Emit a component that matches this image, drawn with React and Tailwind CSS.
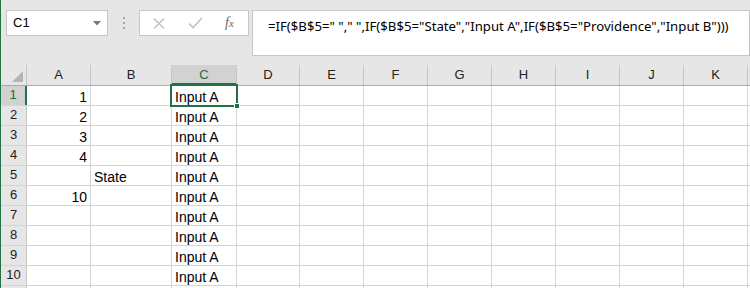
const columns = [
  { key: 'A', w: 'w-[64px]' },
  { key: 'B', w: 'w-[81px]' },
  { key: 'C', w: 'w-[65px]' },
  { key: 'D', w: 'w-[63px]' },
  { key: 'E', w: 'w-[64px]' },
  { key: 'F', w: 'w-[64px]' },
  { key: 'G', w: 'w-[64px]' },
  { key: 'H', w: 'w-[64px]' },
  { key: 'I', w: 'w-[64px]' },
  { key: 'J', w: 'w-[64px]' },
  { key: 'K', w: 'w-[64px]' },
  { key: 'L', w: 'w-[64px]', hidden: true },
];

const data = {
  1: { A: 1, C: 'Input A' },
  2: { A: 2, C: 'Input A' },
  3: { A: 3, C: 'Input A' },
  4: { A: 4, C: 'Input A' },
  5: { B: 'State', C: 'Input A' },
  6: { A: 10, C: 'Input A' },
  7: { C: 'Input A' },
  8: { C: 'Input A' },
  9: { C: 'Input A' },
  10: { C: 'Input A' },
};

const formula = '=IF($B$5=" "," ",IF($B$5="State","Input A",IF($B$5="Providence","Input B")))';

const Toolbar = () => (
  <div className="h-[65px] bg-[#e6e6e6] flex items-start pt-[10px] pl-[5px]">
    <div className="w-[102px] h-[26px] bg-white border border-[#c6c6c6] flex items-center pl-[6px] pr-[6px] justify-between">
      <span className="text-[13px] text-black">C1</span>
      <svg width="8" height="5" viewBox="0 0 8 5"><path d="M0 0h8L4 4.5z" fill="#777" /></svg>
    </div>
    <div className="w-[31px] h-[26px] flex flex-col items-center justify-center gap-[3px]">
      <span className="w-[2px] h-[2px] bg-[#a6a6a6]" />
      <span className="w-[2px] h-[2px] bg-[#a6a6a6]" />
      <span className="w-[2px] h-[2px] bg-[#a6a6a6]" />
    </div>
    <div className="w-[110px] h-[26px] bg-white border border-[#c6c6c6] flex items-center">
      <svg className="ml-[13px]" width="12" height="11" viewBox="0 0 12 11">
        <path d="M1 0.5L11 10.5M11 0.5L1 10.5" stroke="#c0c0c0" strokeWidth="1.4" />
      </svg>
      <svg className="ml-[23px]" width="15" height="12" viewBox="0 0 15 12">
        <path d="M1 6.5L5 10.5L14 1" stroke="#c0c0c0" strokeWidth="1.6" fill="none" />
      </svg>
      <span className="ml-[22px] text-[14px] italic text-[#666] font-['Liberation_Serif',serif] leading-none">
        f<span className="text-[11px]">x</span>
      </span>
    </div>
    <div className="ml-[3px] w-[498px] h-[46px] bg-white border border-[#c6c6c6] pl-[15px] pt-[3px]">
      <span className="text-[13.2px] text-black whitespace-nowrap font-['Noto_Sans',sans-serif]">{formula}</span>
    </div>
  </div>
);

const HeaderRow = () => (
  <div className="flex h-[21px] bg-[#e6e6e6] border-b border-[#ababab]">
    <div className="w-[26px] shrink-0 border-r border-[#c6c6c6] flex items-end justify-end pr-[3px] pb-[3px]">
      <svg width="11" height="11" viewBox="0 0 11 11"><path d="M11 0V11H0z" fill="#b4b4b4" /></svg>
    </div>
    {columns.map(c => (
      <div
        key={c.key}
        className={`${c.w} shrink-0 flex items-center justify-center text-[13px] border-r border-[#c6c6c6] ${
          c.key === 'C'
            ? 'bg-[#d2d2d2] text-[#1e6b41] shadow-[inset_0_-2px_0_#217346]'
            : 'text-[#222]'
        }`}
      >
        {!c.hidden && c.key}
      </div>
    ))}
  </div>
);

const Row = ({ n }) => {
  const row = data[n] || {};
  const sel = n === 1;
  return (
    <div className="flex h-[20px] border-b border-[#d4d4d4]">
      <div
        className={`w-[26px] shrink-0 flex items-end justify-center pb-[1px] text-[13px] border-r ${
          sel
            ? 'bg-[#d2d2d2] text-[#1e6b41] border-[#217346] border-r-2'
            : 'bg-[#e6e6e6] text-[#222] border-[#c6c6c6]'
        }`}
      >
        {n <= 10 && n}
      </div>
      {columns.map(c => {
        const v = row[c.key];
        const num = typeof v === 'number';
        return (
          <div
            key={c.key}
            className={`${c.w} shrink-0 border-r border-[#d4d4d4] flex items-end leading-[16px] text-[14px] text-black ${
              num ? 'justify-end pr-[3px]' : 'justify-start pl-[3px]'
            }`}
          >
            {v}
          </div>
        );
      })}
    </div>
  );
};

export default function App() {
  return (
    <div className="relative w-[750px] h-[288px] overflow-hidden bg-white border-l border-[#217346] font-['Liberation_Sans',Arial,sans-serif]">
      <Toolbar />
      <HeaderRow />
      {[1, 2, 3, 4, 5, 6, 7, 8, 9, 10, 11].map(n => <Row key={n} n={n} />)}
      {/* active cell outline */}
      <div className="absolute left-[169px] top-[84px] w-[68px] h-[23px] border-2 border-[#217346] pointer-events-none" />
      <div className="absolute left-[233px] top-[103px] w-[6px] h-[6px] bg-[#217346] border border-white" />
    </div>
  );
}
